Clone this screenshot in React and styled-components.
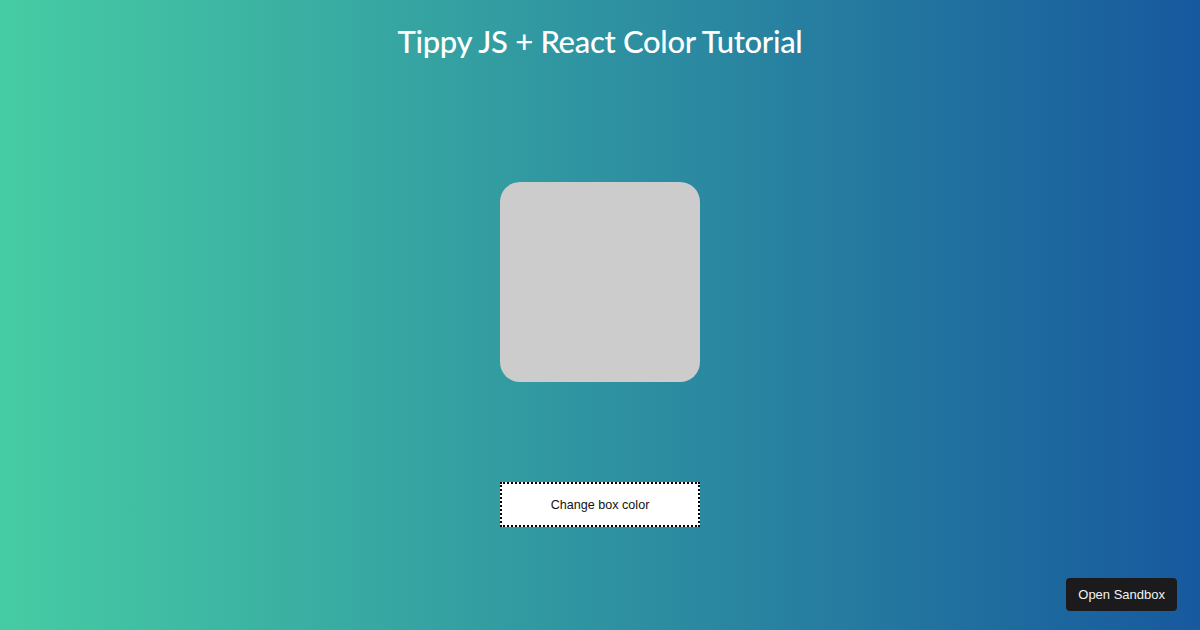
import React from "react";
import styled, { createGlobalStyle } from "styled-components";

const Global = createGlobalStyle`
  html, body { margin: 0; padding: 0; }
  body { font-family: "Liberation Sans", Arial, sans-serif; }
`;

const Page = styled.div`
  position: relative;
  width: 100%;
  height: 630px;
  background: linear-gradient(to right, #46cca4 0%, #17599e 100%);
  display: flex;
  flex-direction: column;
  align-items: center;
  overflow: hidden;
`;

const Title = styled.h1`
  margin: 0;
  padding-top: 21px;
  line-height: 40px;
  font-family: "Lato", "Open Sans", sans-serif;
  font-weight: 500;
  font-size: 31px;
  color: #ffffff;
  letter-spacing: -0.3px;
`;

const ColorBox = styled.div`
  margin-top: 121px;
  width: 200px;
  height: 200px;
  border-radius: 20px;
  background: ${(p) => p.$color};
`;

const ChangeButton = styled.button`
  margin-top: 100px;
  width: 200px;
  height: 45px;
  background: #ffffff;
  border: 2px dotted #000;
  font-family: "Liberation Sans", Arial, sans-serif;
  font-size: 12.6px;
  color: #111;
  cursor: pointer;
`;

const SandboxLink = styled.a`
  position: absolute;
  right: 23px;
  bottom: 19px;
  height: 33px;
  padding: 0 12px;
  display: flex;
  align-items: center;
  background: #1b1b1d;
  border-radius: 4px;
  color: #f2f2f2;
  font-family: "Liberation Sans", Arial, sans-serif;
  font-size: 13px;
  text-decoration: none;
`;

export default function App() {
  return (
    <>
      <Global />
      <Page>
        <Title>Tippy JS + React Color Tutorial</Title>
        <ColorBox $color="#cccccc" />
        <ChangeButton>Change box color</ChangeButton>
        <SandboxLink href="#">Open Sandbox</SandboxLink>
      </Page>
    </>
  );
}
